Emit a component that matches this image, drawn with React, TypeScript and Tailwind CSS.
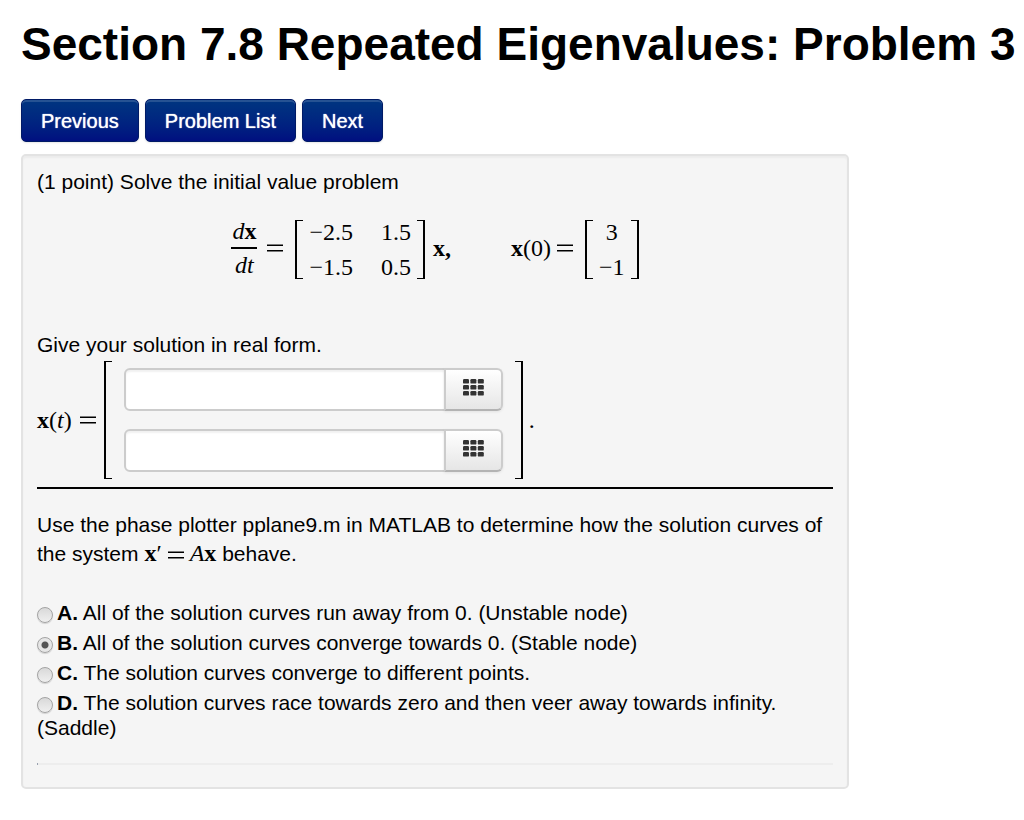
import { useState } from 'react';

import type { ReactNode } from 'react';

const choices = [
  { id: 'A', text: 'All of the solution curves run away from 0. (Unstable node)' },
  { id: 'B', text: 'All of the solution curves converge towards 0. (Stable node)' },
  { id: 'C', text: 'The solution curves converge to different points.' },
  { id: 'D', text: 'The solution curves race towards zero and then veer away towards infinity. (Saddle)' },
];

const rows = [0, 1, 2];

function NavButton({ children }: { children: ReactNode }) {
  return (
    <button
      type="button"
      className="h-[43px] rounded-[5px] border border-[#001a66] bg-linear-to-b from-[#003580] to-[#000f80] px-[19px] text-xl font-normal text-white [text-shadow:0_0_1px_white] shadow-[inset_0_2px_0_rgba(255,255,255,0.15),0_1px_2px_rgba(0,0,0,0.1)]"
    >
      {children}
    </button>
  );
}

// Square brackets around a matrix or vector
function Brackets({ children }: { children: ReactNode }) {
  return (
    <span className="flex items-stretch">
      <span className="w-2 border-y border-l-2 border-black" />
      {children}
      <span className="w-2 border-y border-r-2 border-black" />
    </span>
  );
}

function Equals() {
  return (
    <svg viewBox="0 0 16 8" className="inline-block h-2 w-4" role="img" aria-label="equals">
      <path d="M0 1.2h16M0 6.8h16" stroke="black" strokeWidth="1.6" />
    </svg>
  );
}

function AnswerField({ label }: { label: string }) {
  const [value, setValue] = useState('');

  return (
    <div className="flex h-[43px] w-[379px]">
      <input
        type="text"
        aria-label={label}
        value={value}
        onChange={(e) => setValue(e.target.value)}
        className="min-w-0 flex-1 rounded-l-md border-2 border-[#cccccc] bg-white px-3 font-sans text-xl shadow-[inset_0_2px_2px_rgba(0,0,0,0.06)] outline-none"
      />
      <button
        type="button"
        aria-label="Equation editor"
        className="-ml-0.5 flex w-[59px] items-center justify-center rounded-r-md border-2 border-[#cccccc] border-b-[#b3b3b3] bg-linear-to-b from-white to-[#e6e6e6] pb-1 shadow-[0_1px_3px_rgba(0,0,0,0.08)]"
      >
        <svg viewBox="0 0 21 17" className="h-[17px] w-[21px]" fill="#333333">
          {rows.map((r) =>
            rows.map((c) => <rect key={`${r}${c}`} x={c * 7.4} y={r * 6} width="6" height="4.6" rx="1.2" />)
          )}
        </svg>
      </button>
    </div>
  );
}

export default function App() {
  const [selected, setSelected] = useState('B');

  return (
    <main className="min-h-screen bg-white px-[21px] pt-5 pb-8 font-['Liberation_Sans',Arial,sans-serif] text-[21px] leading-6 text-black">
      <h1 className="text-[46px] leading-[48px] font-bold whitespace-nowrap">
        Section 7.8 Repeated Eigenvalues: Problem 3
      </h1>

      <nav className="mt-[31px] flex gap-1.5">
        <NavButton>Previous</NavButton>
        <NavButton>Problem List</NavButton>
        <NavButton>Next</NavButton>
      </nav>

      <section className="mt-3 max-w-[828px] rounded-[5px] border-2 border-[#e3e3e3] bg-[#f5f5f5] px-3.5 pt-3.5 pb-[22px] shadow-[inset_0_2px_2px_rgba(0,0,0,0.04)]">
        <p>(1 point) Solve the initial value problem</p>

        {/* dx/dt = A x, x(0) = x0 */}
        <div className="mt-[25px] flex items-center justify-center font-['Liberation_Serif',serif] text-2xl leading-none">
          <div className="flex flex-col items-center pb-0.5">
            <span className="border-b-2 border-black px-px pb-1">
              <i>d</i>
              <b>x</b>
            </span>
            <i className="pt-1">dt</i>
          </div>
          <span className="mr-3 ml-2.5 flex pb-0.5"><Equals /></span>
          <Brackets>
            <table className="mx-1.5 text-right">
              <tbody>
                <tr>
                  <td className="pr-7">−2.5</td>
                  <td>1.5</td>
                </tr>
                <tr>
                  <td className="pt-[11px] pr-7">−1.5</td>
                  <td className="pt-[11px]">0.5</td>
                </tr>
              </tbody>
            </table>
          </Brackets>
          <b className="ml-2 pb-0.5">x,</b>
          <span className="ml-[60px] pb-0.5">
            <b>x</b>(0)
          </span>
          <span className="mr-3 ml-1.5 flex pb-0.5"><Equals /></span>
          <Brackets>
            <table className="mx-1.5 text-center">
              <tbody>
                <tr>
                  <td>3</td>
                </tr>
                <tr>
                  <td className="pt-[11px]">−1</td>
                </tr>
              </tbody>
            </table>
          </Brackets>
        </div>

        <p className="mt-[54px]">Give your solution in real form.</p>

        <div className="mt-1 flex items-center font-['Liberation_Serif',serif] text-2xl leading-none">
          <span>
            <b>x</b>(<i>t</i>)
          </span>
          <span className="mx-2 flex"><Equals /></span>
          <Brackets>
            <div className="mx-3 flex flex-col gap-[18px] py-[7px]">
              <AnswerField label="First component of x(t)" />
              <AnswerField label="Second component of x(t)" />
            </div>
          </Brackets>
          <span className="ml-1.5">.</span>
        </div>

        <hr className="mt-2 border-t-2 border-black" />

        <p className="mt-[21px] leading-[29px]">
          Use the phase plotter pplane9.m in MATLAB to determine how the solution curves of{' '}
          <span>the system </span>
          <span className="font-['Liberation_Serif',serif] text-2xl leading-none">
            <b>x</b>′ <Equals /> <i>A</i>
            <b>x</b>
          </span>{' '}
          behave.
        </p>

        <div role="radiogroup" className="mt-8 flex flex-col gap-[5px] leading-[25px]">
          {choices.map((choice) => (
            <label key={choice.id} className="block">
              <input
                type="radio"
                name="behavior"
                value={choice.id}
                checked={selected === choice.id}
                onChange={() => setSelected(choice.id)}
                className="mr-1 size-4 appearance-none rounded-full border border-[#a3a3a3] bg-linear-to-b from-[#d9d9d9] to-[#efefef] align-[-3px] shadow-[0_1px_1px_rgba(0,0,0,0.15)] checked:bg-[radial-gradient(circle,#555555_3px,#e6e6e6_4px)]"
              />
              <b>{choice.id}.</b> {choice.text}
            </label>
          ))}
        </div>

        <hr className="mt-[23px] h-0.5 border-t-0 border-l border-l-gray-400 bg-[#ededed]" />
      </section>
    </main>
  );
}
